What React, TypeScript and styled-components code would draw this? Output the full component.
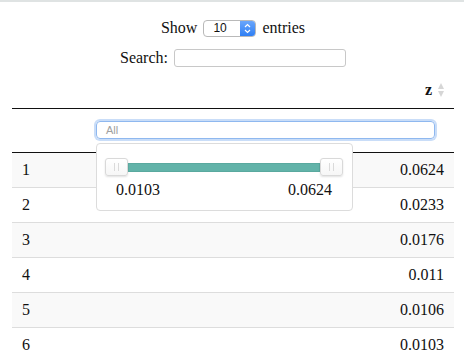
import styled, { createGlobalStyle } from "styled-components";

const GlobalStyle = createGlobalStyle`
  body {
    margin: 0;
    background: #fff;
    color: #111;
    font-family: "Liberation Serif", "Times New Roman", serif;
    font-size: 16px;
  }
`;

const Page = styled.div`
  border-top: 2px solid #dfe3e3;
  padding: 0 10px 0 12px;
`;

const ControlRow = styled.div<{ $top: number }>`
  display: flex;
  align-items: center;
  justify-content: center;
  gap: 6px;
  height: 18px;
  margin-top: ${({ $top }) => $top}px;
  line-height: 18px;
`;

const SelectBox = styled.div`
  display: flex;
  width: 53px;
  height: 17px;
  border: 1px solid #b9b9b9;
  border-radius: 4px;
  overflow: hidden;
  box-sizing: border-box;
  background: #fff;
`;

const SelectValue = styled.span`
  flex: 1;
  padding-left: 9px;
  font-family: "Liberation Sans", Arial, sans-serif;
  font-size: 12px;
  line-height: 15px;
  color: #111;
`;

const SelectArrows = styled.span`
  width: 15px;
  display: flex;
  align-items: center;
  justify-content: center;
  background: linear-gradient(#6aa6fb, #2f7ff4);
`;

const SearchInput = styled.div`
  width: 172px;
  height: 18px;
  box-sizing: border-box;
  border: 1px solid #c8c8c8;
  border-radius: 3px;
  background: #fff;
`;

const Table = styled.table`
  width: 100%;
  margin-top: 4px;
  border-collapse: separate;
  border-spacing: 0;
  table-layout: fixed;
`;

const HeadCell = styled.th`
  padding: 10px;
  line-height: 17px;
  border-bottom: 1px solid #111;
  font-weight: bold;
`;

const SortWrap = styled.div`
  display: flex;
  justify-content: flex-end;
  align-items: center;
  gap: 6px;
`;

const FilterCell = styled.td`
  position: relative;
  padding: 12px 10px 13px;
  border-bottom: 1px solid #111;
`;

const FilterInput = styled.div`
  width: 339px;
  height: 18px;
  box-sizing: border-box;
  border: 1px solid #8fb8ef;
  border-radius: 4px;
  box-shadow: 0 0 0 2px #c9ddf8;
  padding-left: 9px;
  font-family: "Liberation Sans", Arial, sans-serif;
  font-size: 11px;
  line-height: 16px;
  color: #a0a0a0;
`;

const Popup = styled.div`
  position: absolute;
  left: 10px;
  top: 34px;
  width: 257px;
  box-sizing: border-box;
  border: 1px solid #dcdcdc;
  border-radius: 4px;
  background: #fff;
  padding: 14px 9px 11px 8px;
  z-index: 2;
`;

const Slider = styled.div`
  display: flex;
  align-items: center;
  height: 18px;
`;

const Handle = styled.div`
  width: 23px;
  height: 18px;
  box-sizing: border-box;
  border: 1px solid #d9d9d9;
  border-radius: 3px;
  background: linear-gradient(#fff, #f6f6f6);
  box-shadow: 0 1px 2px rgba(0, 0, 0, 0.12);
  display: flex;
  justify-content: center;
  align-items: center;
  gap: 3px;

  &::before,
  &::after {
    content: "";
    width: 1px;
    height: 8px;
    background: #dadada;
  }
`;

const Connect = styled.div`
  flex: 1;
  height: 9px;
  background: #62b3a9;
  box-shadow: inset 0 0 0 1px #5aa99f;
`;

const Labels = styled.div`
  display: flex;
  justify-content: space-between;
  margin-top: 5px;
  padding: 0 11px 0 11px;
  line-height: 18px;
`;

const Row = styled.tr<{ $striped: boolean }>`
  background: ${({ $striped }) => ($striped ? "#f9f9f9" : "#fff")};
`;

const Cell = styled.td<{ $align?: "left" | "right"; $first: boolean }>`
  padding: 8px 10px;
  line-height: 18px;
  text-align: ${({ $align }) => $align ?? "left"};
  border-top: ${({ $first }) => ($first ? "none" : "1px solid #ddd")};
`;

const rows = [
  { id: 1, z: "0.0624" },
  { id: 2, z: "0.0233" },
  { id: 3, z: "0.0176" },
  { id: 4, z: "0.011" },
  { id: 5, z: "0.0106" },
  { id: 6, z: "0.0103" },
];

const SortIcon = () => (
  <svg width="6" height="14" viewBox="0 0 6 14">
    <path d="M3 0 L6 6 L0 6 Z" fill="#d6d6d6" />
    <path d="M0 8 L6 8 L3 14 Z" fill="#d6d6d6" />
  </svg>
);

const App = () => {
  return (
    <Page>
      <GlobalStyle />
      <ControlRow $top={17}>
        <span>Show</span>
        <SelectBox>
          <SelectValue>10</SelectValue>
          <SelectArrows>
            <svg width="7" height="11" viewBox="0 0 7 11">
              <path
                d="M1 4 L3.5 1.5 L6 4 M1 7 L3.5 9.5 L6 7"
                fill="none"
                stroke="#fff"
                strokeWidth="1.2"
              />
            </svg>
          </SelectArrows>
        </SelectBox>
        <span>entries</span>
      </ControlRow>
      <ControlRow $top={12}>
        <span>Search:</span>
        <SearchInput />
      </ControlRow>

      <Table>
        <colgroup>
          <col style={{ width: 74 }} />
          <col />
        </colgroup>
        <thead>
          <tr>
            <HeadCell />
            <HeadCell>
              <SortWrap>
                <span>z</span>
                <SortIcon />
              </SortWrap>
            </HeadCell>
          </tr>
          <tr>
            <FilterCell />
            <FilterCell>
              <FilterInput>All</FilterInput>
              <Popup>
                <Slider>
                  <Handle />
                  <Connect />
                  <Handle />
                </Slider>
                <Labels>
                  <span>0.0103</span>
                  <span>0.0624</span>
                </Labels>
              </Popup>
            </FilterCell>
          </tr>
        </thead>
        <tbody>
          {rows.map((r, i) => (
            <Row key={r.id} $striped={i % 2 === 0}>
              <Cell $first={i === 0}>{r.id}</Cell>
              <Cell $first={i === 0} $align="right">
                {r.z}
              </Cell>
            </Row>
          ))}
        </tbody>
      </Table>
    </Page>
  );
};

export default App;
